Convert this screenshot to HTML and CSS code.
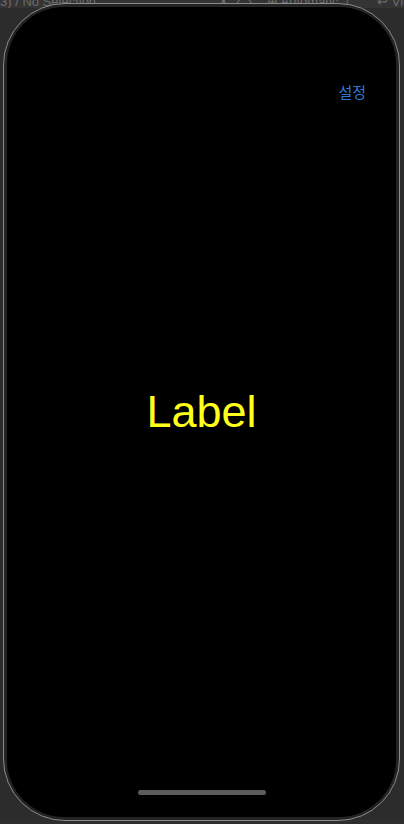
FILE: index.html
```html
<!DOCTYPE html>
<html lang="ko">
<head>
<meta charset="utf-8">
<title>Simulator</title>
<link rel="stylesheet" href="styles.css">
</head>
<body>
<div class="xcode">
  <div class="toolbar">
    <span class="crumb">3) / No Selection</span>
    <span class="mid">✕ &nbsp;‹ &nbsp;› &nbsp;&nbsp; ⊕ Automatic &nbsp;/</span>
    <span class="view">↩ View</span>
  </div>
</div>
<div class="device">
  <div class="screen">
    <div class="nav"><span class="nav-btn">설정</span></div>
    <div class="label">Label</div>
    <div class="home"></div>
  </div>
</div>
</body>
</html>
```

FILE: styles.css
```css
html, body {
  margin: 0;
  padding: 0;
}
body {
  width: 404px;
  height: 824px;
  overflow: hidden;
  background: #2e2e2e;
  font-family: "Liberation Sans", Arial, sans-serif;
  position: relative;
}
.xcode {
  height: 100%;
  background: #2c2c2c;
}
.toolbar {
  display: flex;
  align-items: center;
  height: 12px;
  margin-top: -4px;
  background: #343434;
  color: #6c6c6c;
  font-size: 13px;
  line-height: 12px;
  white-space: nowrap;
  overflow: hidden;
}
.crumb { flex: none; }
.mid { margin-left: 122px; flex: none; }
.view { margin-left: 28px; flex: none; }

.device {
  position: absolute;
  left: 3px;
  top: 3px;
  width: 397px;
  height: 818px;
  box-sizing: border-box;
  border: 1px solid #8c8c8c;
  border-radius: 62px;
  padding: 3px;
  background: #232323;
}
.screen {
  width: 100%;
  height: 100%;
  background: #000;
  border-radius: 57px;
  display: grid;
  grid-template-areas: "all";
  overflow: hidden;
}
.nav {
  grid-area: all;
  align-self: start;
  display: flex;
  justify-content: flex-end;
  padding: 75px 30px 0 0;
}
.nav-btn {
  color: #2f78d8;
  font-family: "Noto Sans CJK KR", "Noto Sans", sans-serif;
  font-size: 15px;
  line-height: 20px;
}
.label {
  grid-area: all;
  align-self: center;
  justify-self: center;
  color: #ffff1a;
  font-size: 45px;
  line-height: 52px;
  font-family: "Liberation Sans", Arial, sans-serif;
}
.home {
  grid-area: all;
  align-self: end;
  justify-self: center;
  width: 128px;
  height: 5px;
  border-radius: 3px;
  background: #5c5c5c;
  margin-bottom: 22px;
}
```
